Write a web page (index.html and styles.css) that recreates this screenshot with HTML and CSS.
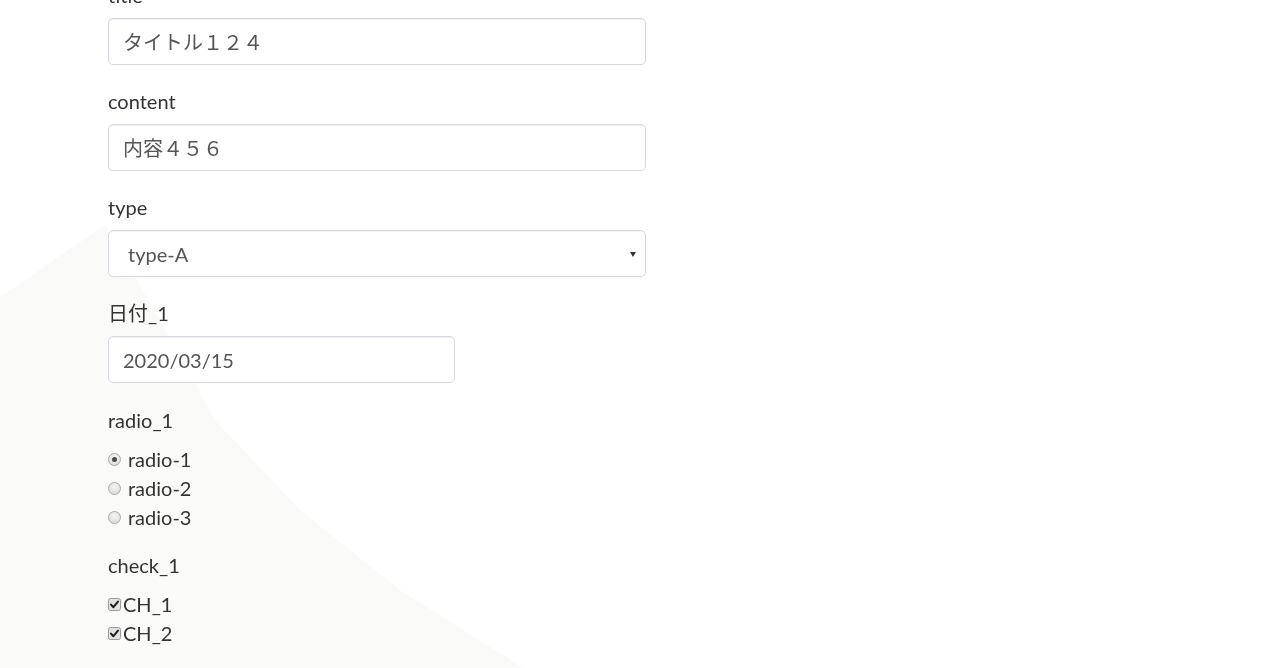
FILE: index.html
```html
<!DOCTYPE html>
<html lang="ja">
<head>
<meta charset="utf-8">
<title>form</title>
<link rel="stylesheet" href="styles.css">
</head>
<body>
<div class="page">
  <form class="form">
    <div class="group">
      <label class="lbl" for="f-title">title</label>
      <input class="control" id="f-title" type="text" value="タイトル１２４">
    </div>
    <div class="group">
      <label class="lbl" for="f-content">content</label>
      <input class="control" id="f-content" type="text" value="内容４５６">
    </div>
    <div class="group">
      <label class="lbl" for="f-type">type</label>
      <div class="select-wrap">
        <select class="control select" id="f-type"><option>type-A</option></select>
        <span class="caret"></span>
      </div>
    </div>
    <div class="group date-group">
      <label class="lbl" for="f-date">日付_1</label>
      <input class="control date" id="f-date" type="text" value="2020/03/15">
    </div>
    <div class="group choice radios">
      <div class="lbl">radio_1</div>
      <div class="opt"><span class="radio checked"></span><span>radio-1</span></div>
      <div class="opt"><span class="radio"></span><span>radio-2</span></div>
      <div class="opt"><span class="radio"></span><span>radio-3</span></div>
    </div>
    <div class="group choice checks">
      <div class="lbl">check_1</div>
      <div class="opt"><svg class="chk" viewBox="0 0 13 13" width="13" height="13"><rect x="0.5" y="0.5" width="12" height="12" rx="2" fill="#e2e2e2" stroke="#9a9a9a"/><path d="M3 6.6 L5.4 9.2 L10 3.6" fill="none" stroke="#1e1e1e" stroke-width="2" stroke-linecap="round" stroke-linejoin="round"/></svg><span>CH_1</span></div>
      <div class="opt"><svg class="chk" viewBox="0 0 13 13" width="13" height="13"><rect x="0.5" y="0.5" width="12" height="12" rx="2" fill="#e2e2e2" stroke="#9a9a9a"/><path d="M3 6.6 L5.4 9.2 L10 3.6" fill="none" stroke="#1e1e1e" stroke-width="2" stroke-linecap="round" stroke-linejoin="round"/></svg><span>CH_2</span></div>
    </div>
  </form>
</div>
</body>
</html>
```

FILE: styles.css
```css
html, body {
  margin: 0;
  padding: 0;
  background: #ffffff;
}

body {
  font-family: Lato, "Noto Sans CJK JP", sans-serif;
  font-size: 20px;
  color: #333333;
  height: 668px;
  overflow: hidden;
}

body::before {
  content: "";
  position: fixed;
  left: 0;
  top: 0;
  width: 1280px;
  height: 668px;
  background: #fafaf8;
  clip-path: polygon(0 297px, 105px 225px, 160px 320px, 215px 420px, 300px 510px, 400px 590px, 523px 668px, 0 668px);
  z-index: 0;
}

.page {
  position: relative;
  z-index: 1;
  margin-top: -19px;
  padding-left: 108px;
  width: 538px;
}

.form {
  margin: 0;
}

.group {
  margin-bottom: 22px;
}

.date-group {
  margin-bottom: 23px;
}

.lbl {
  display: block;
  line-height: 28px;
  margin-bottom: 9px;
  font-weight: normal;
  color: #333333;
}

.control {
  display: block;
  box-sizing: border-box;
  width: 538px;
  height: 47px;
  margin: 0;
  padding: 0 14px;
  font-family: Lato, "Noto Sans CJK JP", sans-serif;
  font-size: 20px;
  color: #555555;
  background: #ffffff;
  border: 1px solid #d5d9df;
  border-radius: 5px;
  box-shadow: inset 0 1px 1px rgba(0, 0, 0, 0.06);
  outline: none;
}

.date {
  width: 347px;
}

.select-wrap {
  position: relative;
  width: 538px;
}

.select {
  appearance: none;
  -webkit-appearance: none;
  padding-left: 19px;
}

.caret {
  position: absolute;
  right: 10px;
  top: 22px;
  width: 0;
  height: 0;
  border-left: 3px solid transparent;
  border-right: 3px solid transparent;
  border-top: 5px solid #333333;
}

.radios .lbl {
  margin-bottom: 11px;
}

.checks .lbl {
  margin-bottom: 11px;
}

.radios {
  margin-bottom: 19px;
}

.opt {
  display: flex;
  align-items: center;
  height: 29px;
  line-height: 29px;
  color: #333333;
}

.radio {
  box-sizing: border-box;
  width: 13px;
  height: 13px;
  border-radius: 50%;
  border: 1px solid #a9a9a9;
  background: radial-gradient(circle at 50% 35%, #f6f6f6 0, #dcdcdc 80%);
  margin-right: 7px;
  display: flex;
  align-items: center;
  justify-content: center;
  flex: none;
}

.radio.checked::after {
  content: "";
  width: 5px;
  height: 5px;
  border-radius: 50%;
  background: #4a4a4a;
}

.chk {
  display: block;
  flex: none;
  margin-right: 2px;
}
```
